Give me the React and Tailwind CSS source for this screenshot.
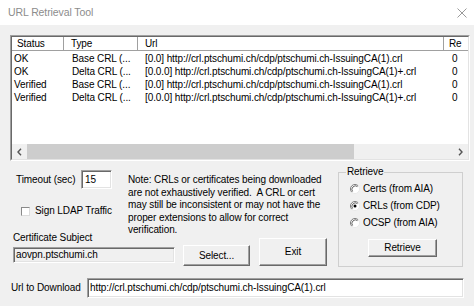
export default function App() {
  const rows = [
    ["OK", "Base CRL (...", "[0.0] http://crl.ptschumi.ch/cdp/ptschumi.ch-IssuingCA(1).crl", "0"],
    ["OK", "Delta CRL (...", "[0.0.0] http://crl.ptschumi.ch/cdp/ptschumi.ch-IssuingCA(1)+.crl", "0"],
    ["Verified", "Base CRL (...", "[0.0] http://crl.ptschumi.ch/cdp/ptschumi.ch-IssuingCA(1).crl", "0"],
    ["Verified", "Delta CRL (...", "[0.0.0] http://crl.ptschumi.ch/cdp/ptschumi.ch-IssuingCA(1)+.crl", "0"],
  ];

  const sunken =
    "border border-t-[#a0a0a0] border-l-[#a0a0a0] border-r-white border-b-white shadow-[inset_1px_1px_0_#696969,inset_-1px_-1px_0_#e3e3e3]";
  const button =
    "flex items-center justify-center bg-[#f0f0f0] border border-t-white border-l-white border-r-[#696969] border-b-[#696969] shadow-[inset_-1px_-1px_0_#a0a0a0]";

  const Radio = ({ checked }) => (
    <svg width="10" height="10" viewBox="0 0 10 10" className="shrink-0">
      <circle cx="5" cy="5" r="4.5" fill="#ffffff" />
      <path d="M8.2 1.8 A4.5 4.5 0 0 0 1.8 8.2" stroke="#7a7a7a" strokeWidth="1" fill="none" />
      <path d="M7.5 2.6 A3.5 3.5 0 0 0 2.6 7.5" stroke="#404040" strokeWidth="0.8" fill="none" />
      <path d="M1.8 8.2 A4.5 4.5 0 0 0 8.2 1.8" stroke="#e8e8e8" strokeWidth="1" fill="none" />
      {checked && <circle cx="5" cy="5" r="1.5" fill="#000000" />}
    </svg>
  );

  return (
    <div className="w-[474px] h-[306px] overflow-hidden bg-[#f0f0f0] text-[10px] leading-none tracking-[-0.1px] text-black font-['Liberation_Sans',Arial,sans-serif]">
      {/* Title bar */}
      <div className="h-[25px] bg-white flex items-center justify-between pl-[8px] pr-[7px]">
        <span className="text-[10.5px] text-[#8c8c8c]">URL Retrieval Tool</span>
        <svg width="10" height="10" viewBox="0 0 10 10">
          <path d="M0.5 0.5 L9.5 9.5 M9.5 0.5 L0.5 9.5" stroke="#9a9a9a" strokeWidth="1" />
        </svg>
      </div>

      {/* List view */}
      <div className="ml-[10px] mt-[10px] w-[460px] h-[126px] border border-t-[#a0a0a0] border-l-[#a0a0a0] border-r-white border-b-white">
        <div className="w-full h-full bg-white border border-t-[#696969] border-l-[#696969] border-r-[#e3e3e3] border-b-[#e3e3e3] flex flex-col overflow-hidden">
          <div className="h-[14px] flex shrink-0 border-b border-[#a0a0a0]">
            <div className="w-[52px] pl-[5px] border-r border-[#a0a0a0] flex items-center">Status</div>
            <div className="w-[74px] pl-[7px] border-r border-[#a0a0a0] flex items-center">Type</div>
            <div className="w-[306px] pl-[7px] border-r border-[#a0a0a0] flex items-center">Url</div>
            <div className="flex-1 pl-[5px] flex items-center overflow-hidden whitespace-nowrap">Re</div>
          </div>
          <div className="pt-[1px] flex flex-col">
            {rows.map((r, i) => (
              <div key={i} className="h-[13px] flex items-center whitespace-nowrap">
                <div className="w-[52px] pl-[2px]">{r[0]}</div>
                <div className="w-[74px] pl-[8px]">{r[1]}</div>
                <div className="w-[306px] pl-[7px] overflow-hidden">{r[2]}</div>
                <div className="flex-1 pl-[8px]">{r[3]}</div>
              </div>
            ))}
          </div>
          <div className="flex-1" />
          <div className="h-[15px] shrink-0 bg-[#f0f0f0] flex">
            <div className="w-[15px] h-full flex items-center justify-center">
              <svg width="5" height="8" viewBox="0 0 5 8">
                <path d="M4 0.8 L1 4 L4 7.2" stroke="#555" strokeWidth="1.4" fill="none" />
              </svg>
            </div>
            <div className="w-[327px] h-full bg-[#cdcdcd]" />
            <div className="flex-1" />
            <div className="w-[15px] h-full flex items-center justify-center">
              <svg width="5" height="8" viewBox="0 0 5 8">
                <path d="M1 0.8 L4 4 L1 7.2" stroke="#555" strokeWidth="1.4" fill="none" />
              </svg>
            </div>
          </div>
        </div>
      </div>

      {/* Lower area */}
      <div className="flex">
        <div className="w-[338px] flex flex-col">
          <div className="h-[71px] flex">
            <div className="w-[128px] pl-[16px] pt-[9px] flex flex-col">
              <div className="h-[19px] flex items-center">
                <span className="w-[65px] whitespace-nowrap">Timeout (sec)</span>
                <div className={`w-[31px] h-[19px] bg-white pl-[3px] pt-[4px] ${sunken}`}>15</div>
              </div>
              <div className="mt-[16px] h-[12px] pl-[5px] flex items-center">
                <div className="w-[9px] h-[9px] bg-white border border-t-[#8a8a8a] border-l-[#8a8a8a] border-r-[#dcdcdc] border-b-[#dcdcdc] shrink-0" />
                <span className="ml-[5px] whitespace-nowrap">Sign LDAP Traffic</span>
              </div>
            </div>
            <div className="pt-[13px] leading-[12.5px] whitespace-pre">
              <div>Note: CRLs or certificates being downloaded</div>
              <div>are not exhaustively verified.  A CRL or cert</div>
              <div>may still be inconsistent or may not have the</div>
              <div>proper extensions to allow for correct</div>
              <div>verification.</div>
            </div>
          </div>
          <div className="flex items-start pl-[13px]">
            <div className="flex flex-col">
              <div className="h-[12px] flex items-center whitespace-nowrap">Certificate Subject</div>
              <div className={`mt-[3px] w-[162px] h-[16px] bg-[#f0f0f0] pl-[2px] flex items-center ${sunken}`}>
                aovpn.ptschumi.ch
              </div>
            </div>
            <div className={`ml-[8px] mt-[13px] w-[67px] h-[21px] ${button}`}>Select...</div>
            <div className={`ml-[9px] mt-[6px] w-[68px] h-[28px] ${button}`}>Exit</div>
          </div>
        </div>

        <fieldset className="mt-[6px] w-[125px] border border-[#cfcfcf]">
          <legend className="ml-[7px] px-[1px] leading-[10px]">Retrieve</legend>
          <div className="pt-[3px] pl-[11px] flex flex-col">
            <div className="h-[17px] flex items-center gap-[3px] whitespace-nowrap">
              <Radio />
              <span>Certs (from AIA)</span>
            </div>
            <div className="h-[17px] flex items-center gap-[3px] whitespace-nowrap">
              <Radio checked />
              <span>CRLs (from CDP)</span>
            </div>
            <div className="h-[17px] flex items-center gap-[3px] whitespace-nowrap">
              <Radio />
              <span>OCSP (from AIA)</span>
            </div>
          </div>
          <div className={`ml-[29px] mt-[8px] mb-[9px] w-[69px] h-[18px] ${button}`}>Retrieve</div>
        </fieldset>
      </div>

      {/* Url row */}
      <div className="mt-[11px] h-[20px] flex items-center pl-[11px]">
        <span className="w-[76px] whitespace-nowrap">Url to Download</span>
        <div className={`w-[377px] h-[20px] bg-white pl-[2px] flex items-center whitespace-nowrap ${sunken}`}>
          http://crl.ptschumi.ch/cdp/ptschumi.ch-IssuingCA(1).crl
        </div>
      </div>
    </div>
  );
}
